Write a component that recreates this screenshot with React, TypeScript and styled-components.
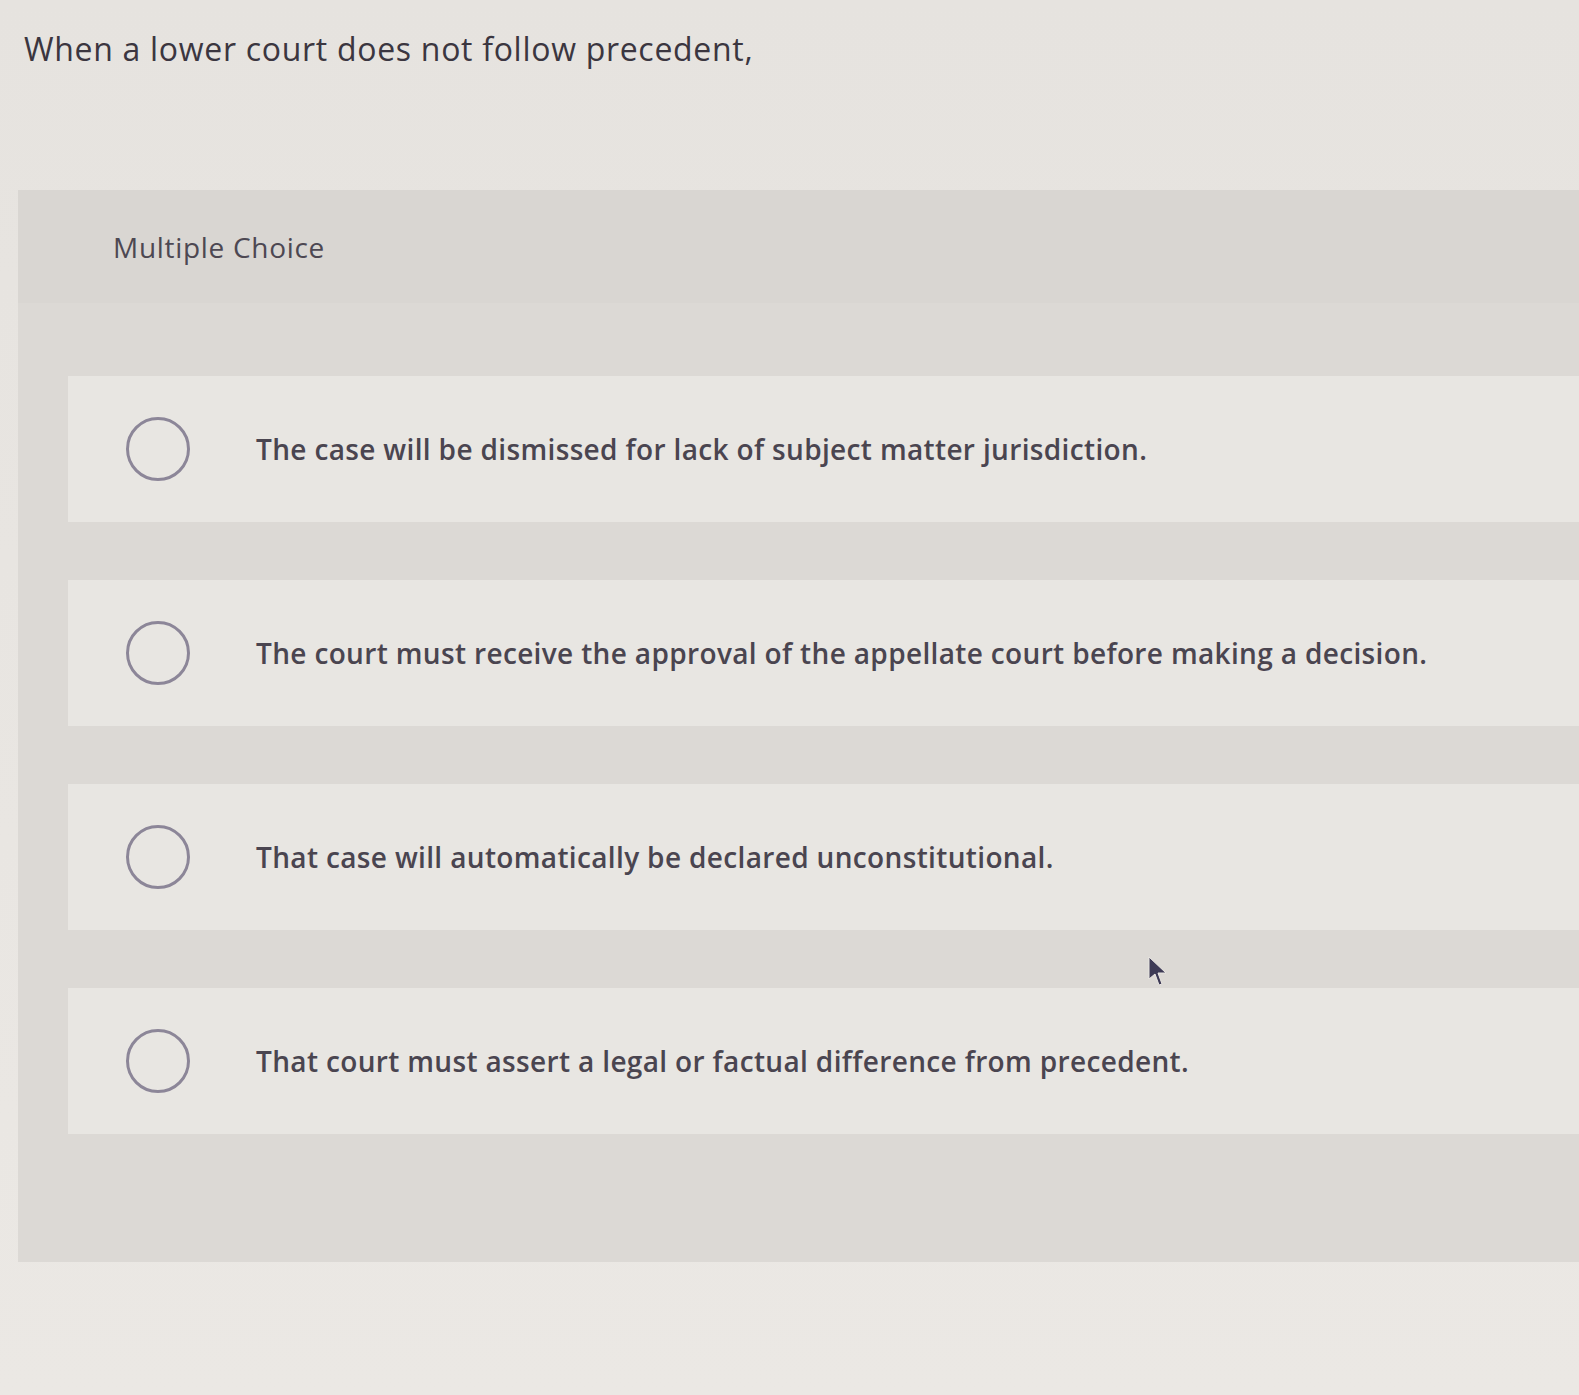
import styled, { createGlobalStyle } from "styled-components";

const GlobalStyle = createGlobalStyle`
  body {
    margin: 0;
    background: #e9e6e2;
    font-family: "Open Sans", Lato, "Liberation Sans", sans-serif;
  }
`;

const Page = styled.main`
  position: relative;
  min-height: 1395px;
  background: linear-gradient(to bottom, #e6e3df 0%, #e9e6e2 60%, #ebe8e4 100%);
  overflow: hidden;
`;

const Question = styled.h1`
  margin: 0;
  padding: 28px 0 0 24px;
  height: 190px;
  box-sizing: border-box;
  font-size: 32px;
  font-weight: 400;
  line-height: 42px;
  letter-spacing: 0.7px;
  color: #3b3640;
`;

const Panel = styled.section`
  margin-left: 18px;
  background: #dcd9d5;
  padding-bottom: 128px;
`;

const PanelHeader = styled.div`
  height: 113px;
  display: flex;
  align-items: center;
  padding-left: 95px;
  background: #d9d6d2;
  font-size: 28px;
  letter-spacing: 0.7px;
  color: #4d4852;
`;

const Options = styled.div`
  display: flex;
  flex-direction: column;
  gap: 58px;
  padding: 73px 0 0 50px;
`;

const Option = styled.label`
  height: 146px;
  display: flex;
  align-items: center;
  background: #e8e6e2;
  cursor: pointer;
`;

const Radio = styled.span`
  width: 58px;
  height: 58px;
  margin-left: 58px;
  border: 3px solid #8c8698;
  border-radius: 50%;
  flex-shrink: 0;
`;

const OptionText = styled.span`
  margin-left: 66px;
  font-size: 28px;
  font-weight: 600;
  letter-spacing: 0.35px;
  color: #4a4550;
`;

const Cursor = styled.svg`
  position: absolute;
  left: 1147px;
  top: 955px;
`;

const choices = [
  "The case will be dismissed for lack of subject matter jurisdiction.",
  "The court must receive the approval of the appellate court before making a decision.",
  "That case will automatically be declared unconstitutional.",
  "That court must assert a legal or factual difference from precedent.",
];

export default function App() {
  return (
    <Page>
      <GlobalStyle />
      <Question>When a lower court does not follow precedent,</Question>
      <Panel>
        <PanelHeader>Multiple Choice</PanelHeader>
        <Options>
          {choices.map((c) => (
            <Option key={c}>
              <Radio />
              <OptionText>{c}</OptionText>
            </Option>
          ))}
        </Options>
      </Panel>
      <Cursor width="22" height="34" viewBox="0 0 22 34">
        <path d="M2 2 L2 24 L8 19 L12 30 L15 29 L11 18 L19 18 Z" fill="#3d3a55" stroke="#e9e6e2" strokeWidth="1" />
      </Cursor>
    </Page>
  );
}
